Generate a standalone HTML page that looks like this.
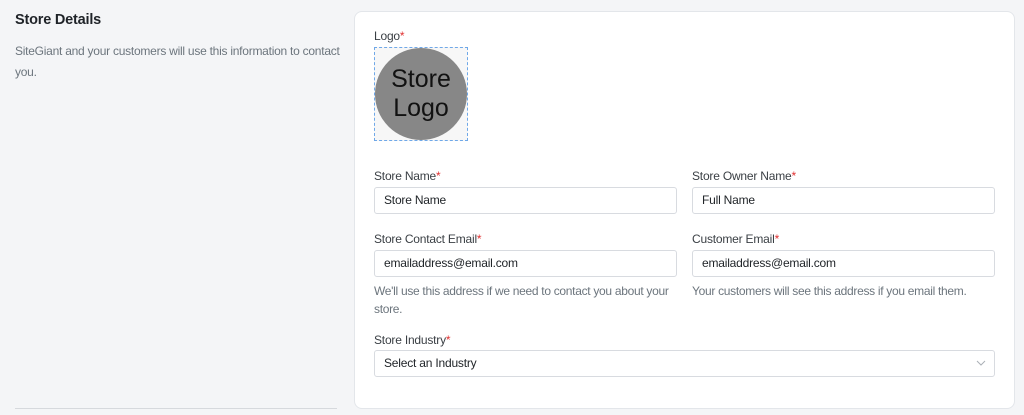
<!DOCTYPE html>
<html><head><style>
*{box-sizing:border-box;margin:0;padding:0}
body{width:1024px;height:415px;background:#f4f5f7;font-family:"Liberation Sans",sans-serif;position:relative;overflow:hidden;color:#212529}
.a{position:absolute}
h2{position:absolute;left:15px;top:12px;font-size:14.5px;font-weight:bold;color:#1f2328;letter-spacing:-0.2px}
.desc{left:15px;top:41px;width:340px;font-size:12px;line-height:21px;color:#6c757d;letter-spacing:-0.25px}
.line{left:15px;top:408px;width:322px;height:1px;background:#d6d9dd}
.card{left:354px;top:11px;width:661px;height:398px;background:#fff;border:1px solid #e3e6ea;border-radius:8px}
.lbl{font-size:12px;color:#3a3f44;letter-spacing:-0.2px}
.lbl b{color:#e03131;font-weight:normal}
.inp{height:27px;border:1px solid #d8dbe0;border-radius:3px;font-size:12px;padding-left:9px;line-height:25px;color:#212529;background:#fff;letter-spacing:-0.2px}
.help{font-size:12px;line-height:18px;color:#6c757d;letter-spacing:-0.3px}
</style></head><body>
<h2>Store Details</h2>
<div class="a desc">SiteGiant and your customers will use this information to contact you.</div>
<div class="a line"></div>
<div class="a card"></div>
<div class="a lbl" style="left:374px;top:29px">Logo<b>*</b></div>
<div class="a" style="left:374px;top:47px;width:94px;height:94px;border:1px dashed #6fa8e8;background:#f7f7f7"></div>
<div class="a" style="left:375px;top:48px;width:92px;height:92px;border-radius:50%;background:#878787;color:#111;font-size:25px;line-height:29px;text-align:center;padding-top:17px">Store<br>Logo</div>
<div class="a lbl" style="left:374px;top:169px">Store Name<b>*</b></div>
<div class="a inp" style="left:374px;top:187px;width:303px">Store Name</div>
<div class="a lbl" style="left:692px;top:169px">Store Owner Name<b>*</b></div>
<div class="a inp" style="left:692px;top:187px;width:303px">Full Name</div>
<div class="a lbl" style="left:374px;top:232px">Store Contact Email<b>*</b></div>
<div class="a inp" style="left:374px;top:250px;width:303px">emailaddress@email.com</div>
<div class="a lbl" style="left:692px;top:232px">Customer Email<b>*</b></div>
<div class="a inp" style="left:692px;top:250px;width:303px">emailaddress@email.com</div>
<div class="a help" style="left:374px;top:282px;width:305px">We'll use this address if we need to contact you about your store.</div>
<div class="a help" style="left:692px;top:282px;width:310px">Your customers will see this address if you email them.</div>
<div class="a lbl" style="left:374px;top:333px">Store Industry<b>*</b></div>
<div class="a inp" style="left:374px;top:350px;width:621px">Select an Industry</div>
<svg class="a" style="left:976px;top:359px" width="10" height="8" viewBox="0 0 10 8"><path d="M1 2L5 6L9 2" fill="none" stroke="#aab0b6" stroke-width="1"/></svg>
</body></html>
